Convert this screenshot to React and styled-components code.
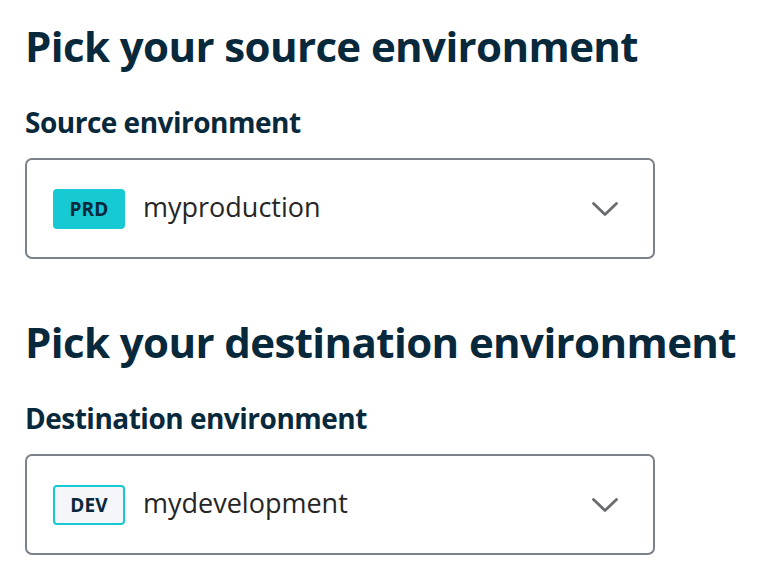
import React from 'react';
import styled, { createGlobalStyle } from 'styled-components';

const GlobalStyle = createGlobalStyle`
	html, body {
		margin: 0;
		padding: 0;
		background: #fff;
	}
	body {
		font-family: "Open Sans", "Liberation Sans", sans-serif;
		color: #08283b;
	}
`;

const environments = [
	{
		heading: 'Pick your source environment',
		label: 'Source environment',
		tag: 'PRD',
		name: 'myproduction',
		solid: true,
	},
	{
		heading: 'Pick your destination environment',
		label: 'Destination environment',
		tag: 'DEV',
		name: 'mydevelopment',
		solid: false,
	},
];

const Chevron = () => (
	<svg width="28" height="16" viewBox="0 0 28 16" fill="none">
		<path d="M2.5 2.5 L14 13.5 L25.5 2.5" stroke="#686b6f" strokeWidth="2.8" strokeLinecap="round" strokeLinejoin="round" />
	</svg>
);

export default function App() {
	return (
		<Page>
			<GlobalStyle />
			{
				environments.map(env => (
					<Section key={ env.tag }>
						<Heading>{ env.heading }</Heading>
						<Label>{ env.label }</Label>
						<Select>
							<Tag solid={ env.solid }>{ env.tag }</Tag>
							<Name>{ env.name }</Name>
							<Arrow><Chevron /></Arrow>
						</Select>
					</Section>
				))
			}
		</Page>
	);
}

const Page = styled.div`
	padding: 20px 0 0 25px;
	display: flex;
	flex-direction: column;
	gap: 57px;
`;

const Section = styled.div`
	display: flex;
	flex-direction: column;
`;

const Heading = styled.h1`
	margin: 0;
	font-size: 42px;
	font-weight: 700;
	line-height: 52px;
	letter-spacing: -0.6px;
	white-space: nowrap;
	color: #08283b;
`;

const Label = styled.div`
	margin-top: 32px;
	font-size: 28px;
	font-weight: 700;
	line-height: 36px;
	letter-spacing: -0.5px;
	color: #08283b;
`;

const Select = styled.div`
	margin-top: 18px;
	width: 630px;
	height: 101px;
	box-sizing: border-box;
	border: 2px solid #7b8289;
	border-radius: 7px;
	display: flex;
	align-items: center;
	padding: 0 34px 0 26px;
`;

const Tag = styled.div`
	width: 72px;
	height: 40px;
	box-sizing: border-box;
	border-radius: 4px;
	display: flex;
	align-items: center;
	justify-content: center;
	font-size: 19px;
	font-weight: 700;
	letter-spacing: 0.2px;
	color: #08283b;
	background: ${ p => p.solid ? '#16c9d3' : '#f4f6f9' };
	border: 2px solid #16c9d3;
`;

const Name = styled.div`
	flex: 1;
	margin-left: 18px;
	margin-top: -5px;
	font-size: 27px;
	font-weight: 400;
	color: #262626;
`;

const Arrow = styled.div`
	display: flex;
	align-items: center;
`;
